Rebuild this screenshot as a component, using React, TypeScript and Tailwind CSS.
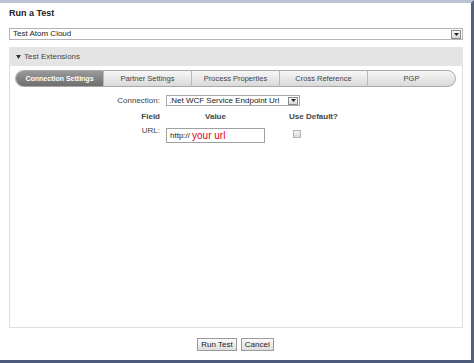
import React, { useState } from "react";

const tabs = ["Connection Settings", "Partner Settings", "Process Properties", "Cross Reference", "PGP"];

const SelectArrow: React.FC = () => (
    <span className="flex h-full w-[10px] items-center justify-center border border-[#8a8a8a] bg-gradient-to-b from-[#fafafa] to-[#d6d6d6]">
        <svg width="5" height="3" viewBox="0 0 5 3">
            <path d="M0 0 H5 L2.5 3 Z" fill="#222" />
        </svg>
    </span>
);

const App: React.FC = () => {
    const [active, setActive] = useState(0);
    const [useDefault, setUseDefault] = useState(false);

    return (
        <div className="flex h-[363px] w-[474px] flex-col border-t-[3px] border-r-[3px] border-b-[3px] border-t-[#bcc3d1] border-r-[#56627c] border-b-[#4c5a79] bg-white font-['Liberation_Sans',Arial,sans-serif] text-[8px] text-[#333]">
            <div className="flex h-[25px] items-start pl-[9px] pt-[4px]">
                <h1 className="text-[9px] font-bold leading-[12px] text-[#222]">Run a Test</h1>
            </div>

            <div className="mr-[8px] ml-[9px] flex h-[12px] items-center justify-between border border-[#b4b4b4] bg-white pr-[1px] pl-[3px]">
                <span className="leading-[10px] text-[#222]">Test Atom Cloud</span>
                <span className="h-[9px]">
                    <SelectArrow />
                </span>
            </div>

            <div className="mt-[7px] mr-[8px] ml-[9px] flex h-[281px] flex-col">
                <div className="flex h-[19px] items-center gap-[3px] bg-[#e4e4e4] pl-[7px]">
                    <svg width="5" height="4" viewBox="0 0 5 4">
                        <path d="M0 0 H5 L2.5 4 Z" fill="#333" />
                    </svg>
                    <span className="text-[#444]">Test Extensions</span>
                </div>

                <div className="flex flex-1 flex-col border-r border-b border-l border-[#dedede]">
                    <div className="mt-[4px] mr-[6px] ml-[5px] flex h-[17px] overflow-hidden rounded-full border border-[#a9a9a9] bg-gradient-to-b from-[#f7f7f7] to-[#d9d9d9]">
                        {tabs.map((t, i) => (
                            <button
                                key={t}
                                onClick={() => setActive(i)}
                                className={`flex flex-1 items-center justify-center leading-none ${i > 0 ? "border-l border-[#b8b8b8]" : ""} ${
                                    active === i
                                        ? "bg-gradient-to-b from-[#9a9a9a] to-[#6e6e6e] text-[7px] font-bold text-white"
                                        : "text-[7.5px] text-[#444]"
                                }`}
                            >
                                {t}
                            </button>
                        ))}
                    </div>

                    <div className="mt-[8px] flex h-[11px] items-center">
                        <span className="w-[150px] text-right text-[#444]">Connection:</span>
                        <div className="ml-[6px] flex h-[11px] w-[134px] items-center justify-between border border-[#a8a8a8] pr-[1px] pl-[2px]">
                            <span className="leading-none text-[#222]">.Net WCF Service Endpoint Url</span>
                            <span className="h-[8px]">
                                <SelectArrow />
                            </span>
                        </div>
                    </div>

                    <div className="mt-[5px] grid grid-cols-[150px_108px_60px] gap-x-[6px]">
                        <span className="h-[11px] text-right font-bold leading-[11px] text-[#444]">Field</span>
                        <span className="h-[11px] w-[99px] text-center font-bold leading-[11px] text-[#444]">Value</span>
                        <span className="ml-[9px] h-[11px] font-bold leading-[11px] whitespace-nowrap text-[#444]">Use Default?</span>

                        <span className="mt-[3px] text-right leading-[11px] text-[#444]">URL:</span>
                        <div className="mt-[6px] flex h-[15px] w-[99px] items-center border border-[#a0a0a0] pl-[3px]">
                            <span className="text-[#222]">http://</span>
                            <span className="ml-[2px] text-[10px] text-[#d8001c]">your url</span>
                        </div>
                        <div className="mt-[8px] ml-[13px]">
                            <button
                                onClick={() => setUseDefault(!useDefault)}
                                className="flex h-[8px] w-[8px] items-center justify-center border border-[#b5b5b5] bg-gradient-to-b from-[#f2f2f2] to-[#dcdcdc] text-[6px] leading-none"
                            >
                                {useDefault ? "✓" : ""}
                            </button>
                        </div>
                    </div>
                </div>
            </div>

            <div className="flex flex-1 items-start justify-center gap-[4px] pt-[10px]">
                <button className="h-[13px] border border-[#9a9a9a] bg-gradient-to-b from-[#fbfbfb] to-[#dedede] px-[3px] leading-none text-[#222]">
                    Run Test
                </button>
                <button className="h-[13px] border border-[#9a9a9a] bg-gradient-to-b from-[#fbfbfb] to-[#dedede] px-[3px] leading-none text-[#222]">
                    Cancel
                </button>
            </div>
        </div>
    );
};

export default App;
